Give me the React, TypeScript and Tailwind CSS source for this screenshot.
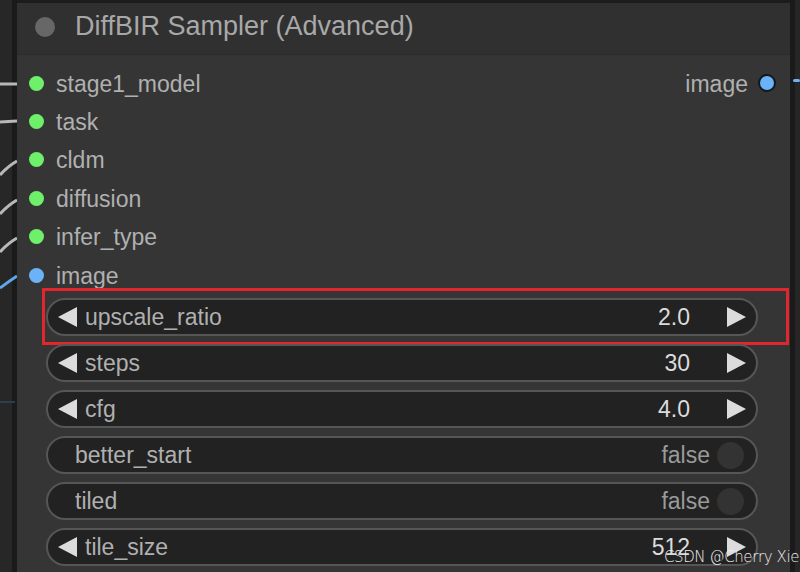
import React from "react";

const font = { fontFamily: '"Liberation Sans", Arial, sans-serif' };

function LeftArrow() {
  return (
    <svg width="19" height="20" viewBox="0 0 19 20" className="shrink-0">
      <polygon points="19,0 19,20 0,10" fill="#dcdcdc" />
    </svg>
  );
}
function RightArrow() {
  return (
    <svg width="19" height="20" viewBox="0 0 19 20" className="shrink-0">
      <polygon points="0,0 0,20 19,10" fill="#dcdcdc" />
    </svg>
  );
}

function NumberWidget({ label, value, highlight }: { label: string; value: string; highlight?: boolean }) {
  return (
    <div className="relative h-[38px] rounded-full border-2 border-[#565656] bg-[#222222] flex items-center pl-[10px] pr-[10px]">
      <LeftArrow />
      <span className="ml-[8px] text-[23px] text-[#b0b0b0] flex-1 leading-none">{label}</span>
      <span className="text-[23px] text-[#dcdcdc] leading-none">{value}</span>
      <span className="ml-[37px] flex items-center">
        <RightArrow />
      </span>
      {highlight && (
        <div className="absolute left-[-6px] top-[-12px] right-[-33px] bottom-[-11px] border-[3px] border-[#e3262e] pointer-events-none" />
      )}
    </div>
  );
}

function ToggleWidget({ label }: { label: string }) {
  return (
    <div className="h-[38px] rounded-full border-2 border-[#565656] bg-[#222222] flex items-center pl-[27px] pr-[12px]">
      <span className="text-[23px] text-[#b0b0b0] flex-1 leading-none">{label}</span>
      <span className="text-[23px] text-[#9a9a9a] leading-none">false</span>
      <span className="ml-[7px] w-[27px] h-[27px] rounded-full bg-[#333333]" />
    </div>
  );
}

function InputRow({ label, color, output }: { label: string; color: string; output?: boolean }) {
  return (
    <div className="h-[38.4px] flex items-center pl-[12px] pr-[14px]">
      <span className="w-[15px] h-[15px] rounded-full shrink-0 -mt-[2px]" style={{ backgroundColor: color }} />
      <span className="ml-[12px] text-[23px] text-[#b0b0b0] flex-1 leading-none">{label}</span>
      {output && (
        <>
          <span className="text-[23px] text-[#b0b0b0] leading-none">image</span>
          <span className="ml-[10px] w-[18px] h-[18px] -mt-[3px] rounded-full bg-[#6cb2f6] border-2 border-[#101820] shrink-0" />
        </>
      )}
    </div>
  );
}

export default function App() {
  return (
    <div className="w-[800px] h-[572px] bg-[#1c1c1c] relative overflow-hidden flex" style={font}>
      {/* left wires strip */}
      <div className="w-[17px] h-full relative shrink-0 bg-[#1a1a1a]">
        <svg width="17" height="572" className="absolute left-0 top-0">
          <rect x="0" y="0" width="12" height="572" fill="#272727" />
          <line x1="0" y1="84" x2="17" y2="84" stroke="#b8b8b8" strokeWidth="3" />
          <line x1="0" y1="122" x2="17" y2="121" stroke="#b8b8b8" strokeWidth="3" />
          <path d="M0 175 Q8 166 17 161" stroke="#b8b8b8" strokeWidth="3" fill="none" />
          <path d="M0 214 Q8 205 17 200" stroke="#b8b8b8" strokeWidth="3" fill="none" />
          <path d="M0 252 Q8 243 17 238" stroke="#b8b8b8" strokeWidth="3" fill="none" />
          <path d="M0 288 Q8 282 17 276" stroke="#5ea6ea" strokeWidth="3" fill="none" />
          <line x1="0" y1="402" x2="15" y2="402" stroke="#2e4a66" strokeWidth="1.5" />
        </svg>
      </div>

      {/* node */}
      <div className="mt-[3px] w-[773px] shrink-0 bg-[#353535] flex flex-col">
        <div className="h-[52px] bg-[#303030] border-b border-[#2b2b2b] flex items-center pl-[18px] pb-[4px]">
          <span className="w-[20px] h-[20px] rounded-full bg-[#676767]" />
          <span className="ml-[20px] text-[27px] text-[#a8a8a8] leading-none">DiffBIR Sampler (Advanced)</span>
        </div>
        <div className="pt-[10px] flex flex-col">
          <InputRow label="stage1_model" color="#6ef06a" output />
          <InputRow label="task" color="#6ef06a" />
          <InputRow label="cldm" color="#6ef06a" />
          <InputRow label="diffusion" color="#6ef06a" />
          <InputRow label="infer_type" color="#6ef06a" />
          <InputRow label="image" color="#6cb2f6" />
        </div>
        <div className="mt-[3px] ml-[29px] mr-[32px] flex flex-col gap-[8px]">
          <NumberWidget label="upscale_ratio" value="2.0" highlight />
          <NumberWidget label="steps" value="30" />
          <NumberWidget label="cfg" value="4.0" />
          <ToggleWidget label="better_start" />
          <ToggleWidget label="tiled" />
          <NumberWidget label="tile_size" value="512" />
        </div>
      </div>

      {/* right strip */}
      <div className="flex-1 h-full relative bg-[#1a1a1a]">
        <div className="absolute left-[5px] top-0 w-[5px] h-full bg-[#262626]" />
        <div className="absolute left-[3px] top-[79px] w-[7px] h-[3px] bg-[#6cb2f6] rounded-full" />
      </div>

      {/* watermark */}
      <div
        className="absolute left-[664px] top-[550px] text-[15px] text-[#ededed] tracking-[-0.4px] leading-none whitespace-nowrap"
        style={{ fontFamily: '"DejaVu Sans", sans-serif', fontWeight: 300 }}
      >
        CSDN @Cherry Xie
      </div>
    </div>
  );
}
